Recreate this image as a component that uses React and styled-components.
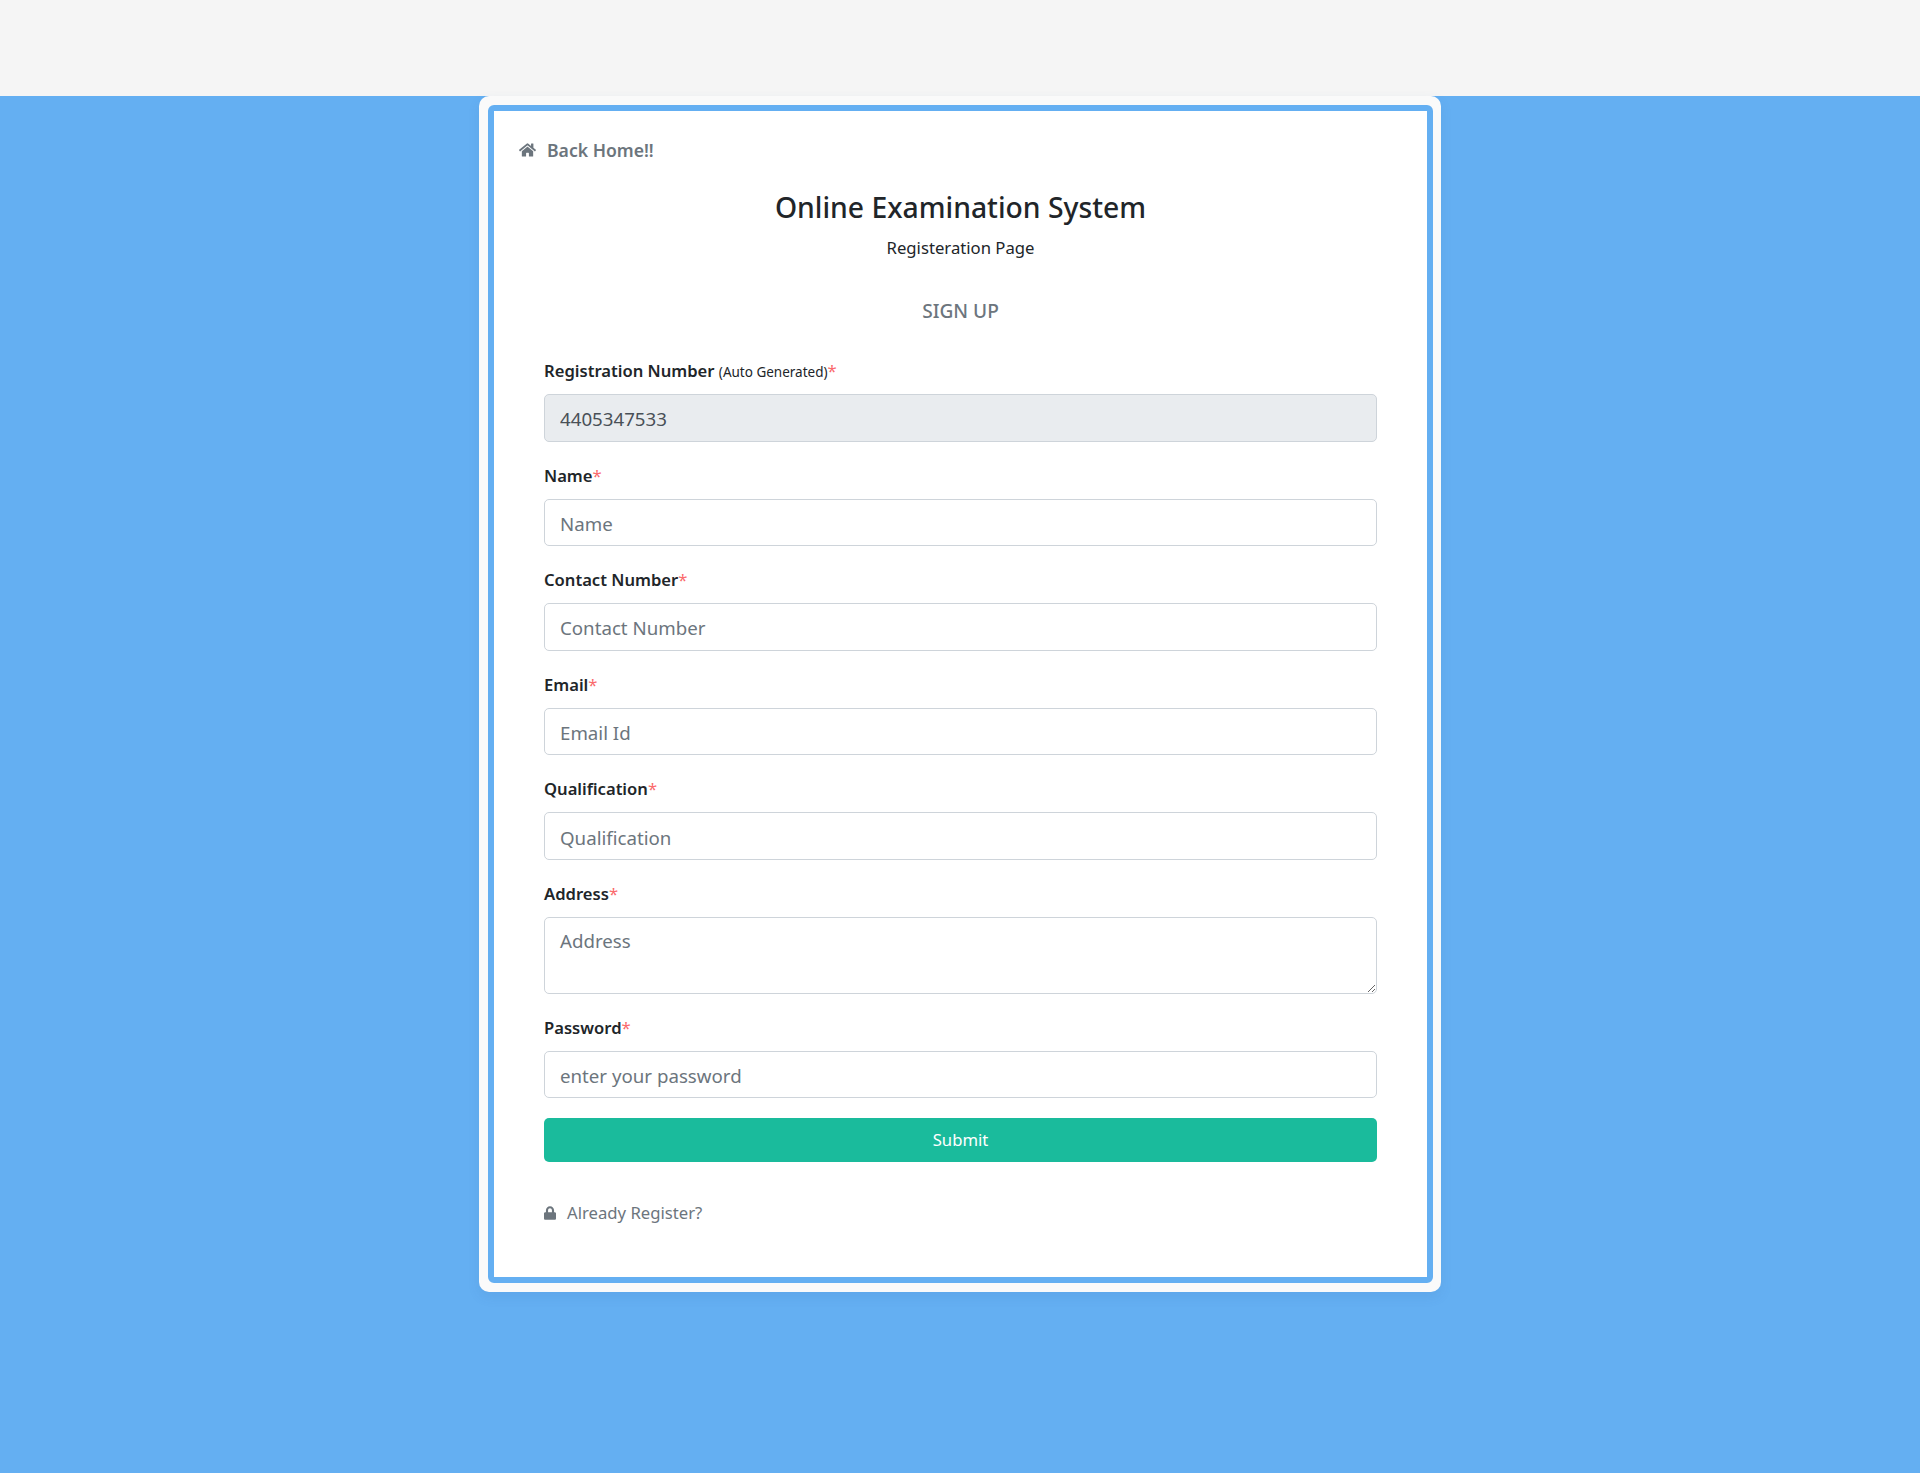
import React from "react";
import styled, { createGlobalStyle } from "styled-components";
import { FaHome, FaLock } from "react-icons/fa";

const fontStack = `"Noto Sans", "Open Sans", "Liberation Sans", sans-serif`;

const GlobalStyle = createGlobalStyle`
  html, body {
    margin: 0;
    padding: 0;
    background: #fff;
  }
  body {
    font-family: ${fontStack};
    color: #212529;
  }
  * {
    box-sizing: border-box;
  }
`;

const TopBand = styled.div`
  height: 96px;
  background: #f5f5f5;
`;

const BlueSection = styled.main`
  height: 1377px;
  background: #64aff2;
  display: flex;
  justify-content: center;
  align-items: flex-start;
`;

const Card = styled.div`
  width: 962px;
  padding: 9px 8px 9px 9px;
  background: #fafafa;
  border-radius: 10px;
  box-shadow: 0 5px 12px rgba(60, 110, 170, 0.12);
`;

const Inner = styled.div`
  border: 6px solid #64aff2;
  border-radius: 6px;
  background: #fff;
  padding: 24px 50px 51px;
`;

const BackLink = styled.a`
  display: flex;
  align-items: center;
  height: 30px;
  margin-left: -25px;
  color: #6c757d;
  font-size: 17.6px;
  line-height: 28px;
  font-weight: 600;
  text-decoration: none;
  svg {
    width: 17px;
    height: 16px;
    margin-right: 11px;
  }
`;

const Title = styled.h1`
  margin: 24px 0 0;
  font-size: 28.3px;
  line-height: 36px;
  font-weight: 500;
  text-align: center;
  color: #212529;
`;

const Subtitle = styled.p`
  margin: 9px 0 0;
  font-size: 16.7px;
  line-height: 28px;
  text-align: center;
  color: #212529;
`;

const SignUp = styled.h2`
  margin: 35px 0 0;
  font-size: 19.1px;
  line-height: 28px;
  font-weight: 500;
  text-align: center;
  color: #6c757d;
`;

const Form = styled.form`
  margin-top: 33px;
`;

const Field = styled.div`
  & + & {
    margin-top: 21px;
  }
`;

const Label = styled.label`
  display: block;
  height: 26px;
  margin-bottom: 10px;
  font-size: 16.6px;
  line-height: 26px;
  font-weight: 600;
  color: #212529;
  small {
    font-size: 13.5px;
    font-weight: 400;
  }
`;

const Star = styled.span`
  color: #fa6a6c;
  font-weight: 400;
`;

const Input = styled.input`
  display: block;
  width: 100%;
  height: 47.6px;
  padding: 2px 15px 0;
  border: 1px solid #ced4da;
  border-radius: 5px;
  background: ${(props) => (props.readOnly ? "#e9ecef" : "#fff")};
  font-family: inherit;
  font-size: 18.7px;
  color: #495057;
  outline: none;
  &::placeholder {
    color: #6c757d;
    opacity: 1;
  }
`;

const TextArea = styled.textarea`
  display: block;
  width: 100%;
  height: 76.7px;
  padding: 8px 15px;
  border: 1px solid #ced4da;
  border-radius: 5px;
  background: #fff;
  font-family: inherit;
  font-size: 18.7px;
  line-height: 29.4px;
  color: #495057;
  outline: none;
  resize: vertical;
  &::placeholder {
    color: #6c757d;
    opacity: 1;
  }
`;

const SubmitButton = styled.button`
  display: block;
  width: 100%;
  height: 43.4px;
  margin-top: 20px;
  border: none;
  border-radius: 5px;
  background: #1abb9c;
  color: #fff;
  font-family: inherit;
  font-size: 16.7px;
  cursor: pointer;
`;

const LoginLink = styled.a`
  display: flex;
  align-items: center;
  height: 26px;
  margin-top: 38px;
  color: #6c757d;
  font-size: 16.7px;
  text-decoration: none;
  svg {
    width: 12px;
    height: 14px;
    margin-right: 11px;
  }
`;

const fields = [
  { label: "Name", placeholder: "Name" },
  { label: "Contact Number", placeholder: "Contact Number" },
  { label: "Email", placeholder: "Email Id" },
  { label: "Qualification", placeholder: "Qualification" },
];

export default function App() {
  return (
    <>
      <GlobalStyle />
      <TopBand />
      <BlueSection>
        <Card>
          <Inner>
            <BackLink href="#">
              <FaHome />
              Back Home!!
            </BackLink>
            <Title>Online Examination System</Title>
            <Subtitle>Registeration Page</Subtitle>
            <SignUp>SIGN UP</SignUp>
            <Form onSubmit={(e) => e.preventDefault()}>
              <Field>
                <Label>
                  Registration Number <small>(Auto Generated)</small>
                  <Star>*</Star>
                </Label>
                <Input readOnly value="4405347533" />
              </Field>
              {fields.map((field) => (
                <Field key={field.label}>
                  <Label>
                    {field.label}
                    <Star>*</Star>
                  </Label>
                  <Input placeholder={field.placeholder} />
                </Field>
              ))}
              <Field>
                <Label>
                  Address<Star>*</Star>
                </Label>
                <TextArea placeholder="Address" />
              </Field>
              <Field>
                <Label>
                  Password<Star>*</Star>
                </Label>
                <Input type="password" placeholder="enter your password" />
              </Field>
              <SubmitButton type="submit">Submit</SubmitButton>
            </Form>
            <LoginLink href="#">
              <FaLock />
              Already Register?
            </LoginLink>
          </Inner>
        </Card>
      </BlueSection>
    </>
  );
}
